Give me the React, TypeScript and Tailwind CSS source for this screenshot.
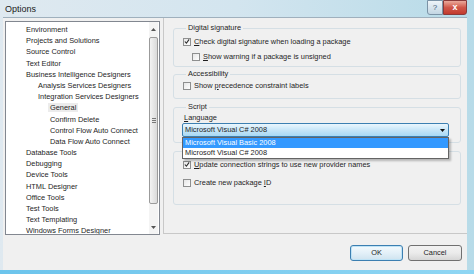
import React from 'react';

const treeItems: { label: string; level: number; selected?: boolean }[] = [
  { label: 'Environment', level: 0 },
  { label: 'Projects and Solutions', level: 0 },
  { label: 'Source Control', level: 0 },
  { label: 'Text Editor', level: 0 },
  { label: 'Business Intelligence Designers', level: 0 },
  { label: 'Analysis Services Designers', level: 1 },
  { label: 'Integration Services Designers', level: 1 },
  { label: 'General', level: 2, selected: true },
  { label: 'Confirm Delete', level: 2 },
  { label: 'Control Flow Auto Connect', level: 2 },
  { label: 'Data Flow Auto Connect', level: 2 },
  { label: 'Database Tools', level: 0 },
  { label: 'Debugging', level: 0 },
  { label: 'Device Tools', level: 0 },
  { label: 'HTML Designer', level: 0 },
  { label: 'Office Tools', level: 0 },
  { label: 'Test Tools', level: 0 },
  { label: 'Text Templating', level: 0 },
  { label: 'Windows Forms Designer', level: 0 },
];

const indent = ['pl-[20px]', 'pl-[32px]', 'pl-[44px]'];

function CheckBox({ checked }: { checked?: boolean }) {
  return (
    <div className="w-[8px] h-[8px] shrink-0 border border-[#8e8f8f] bg-gradient-to-br from-[#e6e6e6] to-white flex items-center justify-center">
      {checked && (
        <svg width="7" height="7" viewBox="0 0 7 7">
          <path d="M1 3.5 L2.8 5.5 L6 1" fill="none" stroke="#2b2b2b" strokeWidth="1.3" />
        </svg>
      )}
    </div>
  );
}

function CheckRow({
  checked,
  pre,
  u,
  post,
  className = '',
}: {
  checked?: boolean;
  pre?: string;
  u: string;
  post: string;
  className?: string;
}) {
  return (
    <div className={`flex items-center gap-[3px] h-[11px] ${className}`}>
      <CheckBox checked={checked} />
      <span className="whitespace-nowrap">
        {pre}
        <span className="underline">{u}</span>
        {post}
      </span>
    </div>
  );
}

function Group({ title, children, className = '' }: { title: string; children: React.ReactNode; className?: string }) {
  return (
    <fieldset className={`border border-[#d5dfe5] rounded-[3px] px-[9px] ${className}`}>
      <legend className="ml-[3px] px-[2px] leading-[10px]">{title}</legend>
      {children}
    </fieldset>
  );
}

export default function App() {
  return (
    <div className="w-[474px] h-[274px] overflow-hidden flex flex-col bg-gradient-to-r from-[#dfe9f0] via-[#d3e5ef] to-[#b7dbe8] font-['Liberation_Sans',sans-serif] text-[7.4px] text-[#1e1e1e]">
      {/* title bar */}
      <div className="h-[17px] shrink-0 flex items-start">
        <span className="pl-[5px] pt-[3px] text-[9px] text-[#1a1a1a]">Options</span>
        <div className="ml-auto mr-[7px] flex">
          <div className="w-[16px] h-[15px] border border-[#7b93a6] rounded-bl-[3px] bg-gradient-to-b from-[#eef4f8] to-[#c3d6e3] flex items-center justify-center text-[8px] text-[#3b5a75]">
            ?
          </div>
          <div className="w-[24px] h-[15px] border border-[#8a3a3a] rounded-br-[3px] bg-gradient-to-b from-[#e9a99b] via-[#d0574a] to-[#c23a2e] flex items-center justify-center text-[9px] font-bold text-white">
            x
          </div>
        </div>
      </div>

      {/* body */}
      <div className="flex-1 ml-[3px] mr-[7px] bg-[#f0f0f0] border-t border-[#9fb0bd] flex flex-col">
        <div className="flex h-[216px]">
          {/* tree list */}
          <div className="ml-[2px] mt-[3px] w-[155px] h-[214px] border border-[#828790] bg-white flex">
            <div className="flex-1 pt-[2px] overflow-hidden">
              {treeItems.map((it) => (
                <div key={it.label} className={`h-[11.2px] leading-[11.2px] whitespace-nowrap ${indent[it.level]}`}>
                  <span className={it.selected ? 'bg-[#ececec] -ml-[2px] px-[2px]' : ''}>{it.label}</span>
                </div>
              ))}
            </div>
            <div className="w-[9px] mr-[1px] flex flex-col bg-[#f4f4f4]">
              <div className="h-[14px] flex items-center justify-center">
                <svg width="5" height="3" viewBox="0 0 5 3">
                  <path d="M0 3 L2.5 0 L5 3 Z" fill="#555" />
                </svg>
              </div>
              <div className="h-[167px] mt-[1px] border border-[#9b9b9b] rounded-[2px] bg-gradient-to-r from-[#f3f3f3] to-[#dadada] flex items-center justify-center">
                <div className="flex flex-col gap-[1px]">
                  <div className="w-[4px] h-px bg-[#777]" />
                  <div className="w-[4px] h-px bg-[#777]" />
                  <div className="w-[4px] h-px bg-[#777]" />
                </div>
              </div>
              <div className="flex-1" />
              <div className="h-[14px] flex items-center justify-center">
                <svg width="5" height="3" viewBox="0 0 5 3">
                  <path d="M0 0 L2.5 3 L5 0 Z" fill="#555" />
                </svg>
              </div>
            </div>
          </div>

          {/* right panel */}
          <div className="flex-1 ml-[3px] border-l border-b border-[#c8c8c8] pl-[9px] pr-[6px] flex flex-col">
            <Group title="Digital signature" className="mt-[5px] pb-[4px]">
              <CheckRow checked className="mt-[3px]" u="C" post="heck digital signature when loading a package" />
              <CheckRow className="mt-[4px] ml-[9px]" u="S" post="how warning if a package is unsigned" />
            </Group>
            <Group title="Accessibility" className="mt-[2px] pb-[7px]">
              <CheckRow className="mt-[1px]" pre="Show " u="p" post="recedence constraint labels" />
            </Group>
            <Group title="Script" className="mt-[3px] pb-[5px] relative">
              <div className="ml-[1px] mt-[1px] h-[10px] leading-[10px]">
                <span className="underline">L</span>anguage
              </div>
              <div className="relative -ml-[1px] mr-[2px] z-10">
                <div className="h-[14px] border border-[#3c7fb1] rounded-[2px] bg-gradient-to-b from-[#eaf6fd] via-[#c7e6f8] to-[#a7d9f5] flex items-center pl-[2px]">
                  <span>Microsoft Visual C# 2008</span>
                  <svg className="ml-auto mr-[3px]" width="5" height="3" viewBox="0 0 5 3">
                    <path d="M0 0 L2.5 3 L5 0 Z" fill="#111" />
                  </svg>
                </div>
                <div className="absolute left-0 right-0 top-full border border-[#646464] bg-white shadow-[2px_2px_2px_rgba(0,0,0,0.25)]">
                  <div className="h-[10px] leading-[10px] bg-[#3399ff] text-white pl-[2px]">Microsoft Visual Basic 2008</div>
                  <div className="h-[10px] leading-[10px] pl-[2px]">Microsoft Visual C# 2008</div>
                </div>
              </div>
            </Group>
            <Group title="Connection" className="mt-[3px] pb-[16px]">
              <CheckRow checked className="mt-[3px]" u="U" post="pdate connection strings to use new provider names" />
              <CheckRow className="mt-[7px]" pre="Create new package " u="I" post="D" />
            </Group>
          </div>
        </div>

        {/* buttons */}
        <div className="flex justify-end gap-[5px] mt-[11px] mr-[5px]">
          <button className="w-[53px] h-[16px] rounded-[3px] border border-[#3c7fb1] bg-gradient-to-b from-[#f4fafd] via-[#e3f0f8] to-[#cfe3ef] shadow-[inset_0_0_0_1px_#bfe3f6] text-[7.4px] text-[#1e1e1e]">
            OK
          </button>
          <button className="w-[54px] h-[16px] rounded-[3px] border border-[#707070] bg-gradient-to-b from-[#f2f2f2] via-[#ebebeb] to-[#d6d6d6] text-[7.4px] text-[#1e1e1e]">
            Cancel
          </button>
        </div>
      </div>
      <div className="h-[4px] shrink-0 bg-gradient-to-r from-[#6cc4ec] to-[#8fd6f3]" />
    </div>
  );
}
